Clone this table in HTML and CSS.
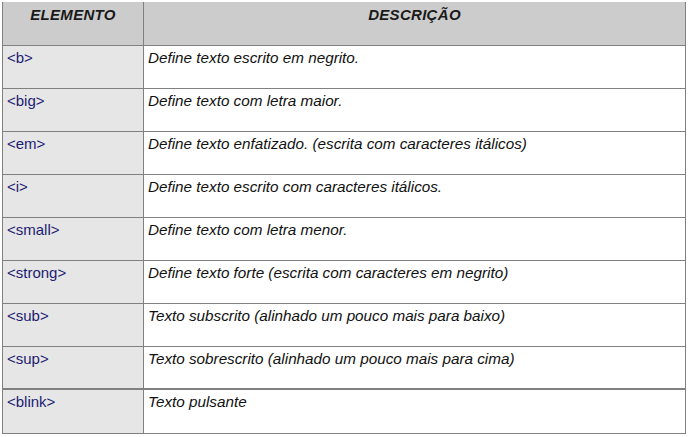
FILE: index.html
```html
<!DOCTYPE html>
<html lang="pt">
<head>
<meta charset="utf-8">
<title>Elementos</title>
<link rel="stylesheet" href="styles.css">
</head>
<body>
<table class="tags">
  <thead>
    <tr>
      <th class="col-el">ELEMENTO</th>
      <th class="col-desc">DESCRIÇÃO</th>
    </tr>
  </thead>
  <tbody>
    <tr><td class="el">&lt;b&gt;</td><td class="desc">Define texto escrito em negrito.</td></tr>
    <tr><td class="el">&lt;big&gt;</td><td class="desc">Define texto com letra maior.</td></tr>
    <tr><td class="el">&lt;em&gt;</td><td class="desc">Define texto enfatizado. (escrita com caracteres itálicos)</td></tr>
    <tr><td class="el">&lt;i&gt;</td><td class="desc">Define texto escrito com caracteres itálicos.</td></tr>
    <tr><td class="el">&lt;small&gt;</td><td class="desc">Define texto com letra menor.</td></tr>
    <tr><td class="el">&lt;strong&gt;</td><td class="desc">Define texto forte (escrita com caracteres em negrito)</td></tr>
    <tr><td class="el">&lt;sub&gt;</td><td class="desc">Texto subscrito (alinhado um pouco mais para baixo)</td></tr>
    <tr><td class="el">&lt;sup&gt;</td><td class="desc">Texto sobrescrito (alinhado um pouco mais para cima)</td></tr>
    <tr class="last"><td class="el">&lt;blink&gt;</td><td class="desc">Texto pulsante</td></tr>
  </tbody>
</table>
</body>
</html>
```

FILE: styles.css
```css
html, body {
  margin: 0;
  padding: 0;
  background: #ffffff;
}

body {
  padding: 2px 0 0 2px;
  font-family: "Liberation Sans", Arial, sans-serif;
}

.tags {
  border-collapse: collapse;
  table-layout: fixed;
  width: 684px;
  font-size: 15px;
  line-height: 17px;
}

.tags th {
  background: #cccccc;
  color: #1a1a1a;
  font-style: italic;
  font-weight: bold;
  font-size: 15px;
  letter-spacing: 0.3px;
  text-align: center;
  vertical-align: top;
  height: 43px;
  padding: 4px 0 0 0;
  box-sizing: border-box;
  border-left: 1px solid #808080;
  border-right: 1px solid #808080;
  border-bottom: 1px solid #808080;
}

.col-el {
  width: 141px;
}

.tags td {
  height: 43px;
  box-sizing: border-box;
  vertical-align: top;
  padding: 3px 4px 0 4px;
  border: 1px solid #808080;
}

.tags .el {
  background: #e6e6e6;
  color: #1c1c72;
}

.tags .desc {
  color: #111111;
  font-style: italic;
  font-size: 15.25px;
}

.tags .last td {
  border-top: 2px solid #808080;
  height: 44px;
}
```
